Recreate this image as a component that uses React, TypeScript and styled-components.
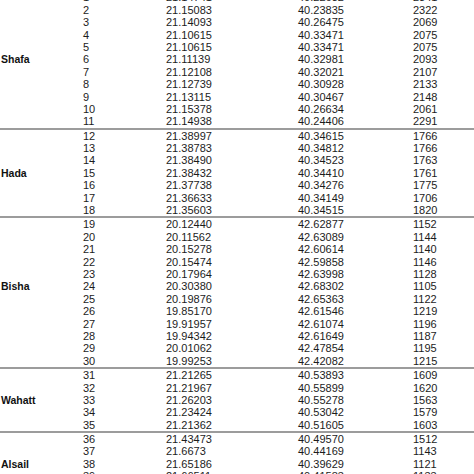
import React from "react";
import styled, { createGlobalStyle } from "styled-components";

const Global = createGlobalStyle`
  html, body { margin: 0; padding: 0; background: #ffffff; overflow: hidden; }
  body { font-family: "Liberation Sans", Arial, sans-serif; }
`;

type Row = [string, string, string, string];
type Group = { name: string; labelRow: number; rows: Row[] };

const groups: Group[] = [
  {
    name: "Shafa",
    labelRow: 5,
    rows: [
      ["1", "21.14741", "40.22632", "2341"],
      ["2", "21.15083", "40.23835", "2322"],
      ["3", "21.14093", "40.26475", "2069"],
      ["4", "21.10615", "40.33471", "2075"],
      ["5", "21.10615", "40.33471", "2075"],
      ["6", "21.11139", "40.32981", "2093"],
      ["7", "21.12108", "40.32021", "2107"],
      ["8", "21.12739", "40.30928", "2133"],
      ["9", "21.13115", "40.30467", "2148"],
      ["10", "21.15378", "40.26634", "2061"],
      ["11", "21.14938", "40.24406", "2291"],
    ],
  },
  {
    name: "Hada",
    labelRow: 3,
    rows: [
      ["12", "21.38997", "40.34615", "1766"],
      ["13", "21.38783", "40.34812", "1766"],
      ["14", "21.38490", "40.34523", "1763"],
      ["15", "21.38432", "40.34410", "1761"],
      ["16", "21.37738", "40.34276", "1775"],
      ["17", "21.36633", "40.34149", "1706"],
      ["18", "21.35603", "40.34515", "1820"],
    ],
  },
  {
    name: "Bisha",
    labelRow: 5,
    rows: [
      ["19", "20.12440", "42.62877", "1152"],
      ["20", "20.11562", "42.63089", "1144"],
      ["21", "20.15278", "42.60614", "1140"],
      ["22", "20.15474", "42.59858", "1146"],
      ["23", "20.17964", "42.63998", "1128"],
      ["24", "20.30380", "42.68302", "1105"],
      ["25", "20.19876", "42.65363", "1122"],
      ["26", "19.85170", "42.61546", "1219"],
      ["27", "19.91957", "42.61074", "1196"],
      ["28", "19.94342", "42.61649", "1187"],
      ["29", "20.01062", "42.47854", "1195"],
      ["30", "19.99253", "42.42082", "1215"],
    ],
  },
  {
    name: "Wahatt",
    labelRow: 2,
    rows: [
      ["31", "21.21265", "40.53893", "1609"],
      ["32", "21.21967", "40.55899", "1620"],
      ["33", "21.26203", "40.55278", "1563"],
      ["34", "21.23424", "40.53042", "1579"],
      ["35", "21.21362", "40.51605", "1603"],
    ],
  },
  {
    name: "Alsail",
    labelRow: 2,
    rows: [
      ["36", "21.43473", "40.49570", "1512"],
      ["37", "21.6673", "40.44169", "1143"],
      ["38", "21.65186", "40.39629", "1121"],
      ["39", "21.66511", "40.41583", "1133"],
      ["40", "21.67204", "40.40127", "1128"],
    ],
  },
];

const Table = styled.div`
  margin-top: -8.6px;
  width: 474px;
  color: #1c1c1c;
  font-family: "Liberation Sans", Arial, sans-serif;
  font-size: 11px;
`;

const GroupBlock = styled.div<{ $first: boolean }>`
  border-top: ${(p) => (p.$first ? "none" : "2px solid #9c9c9c")};
`;

const DataRow = styled.div`
  display: grid;
  grid-template-columns: 83px 83px 132px 115px 1fr;
  height: 12.4px;
  line-height: 12.4px;
  white-space: nowrap;
`;

const Label = styled.span`
  padding-left: 1px;
  font-weight: bold;
  font-size: 10.5px;
  color: #111111;
`;

const Cell = styled.span``;

export default function App() {
  return (
    <>
      <Global />
      <Table>
        {groups.map((g, gi) => (
          <GroupBlock key={g.name} $first={gi === 0}>
            {g.rows.map((r, ri) => (
              <DataRow key={r[0]}>
                <Label>{ri === g.labelRow ? g.name : ""}</Label>
                <Cell>{r[0]}</Cell>
                <Cell>{r[1]}</Cell>
                <Cell>{r[2]}</Cell>
                <Cell>{r[3]}</Cell>
              </DataRow>
            ))}
          </GroupBlock>
        ))}
      </Table>
    </>
  );
}
